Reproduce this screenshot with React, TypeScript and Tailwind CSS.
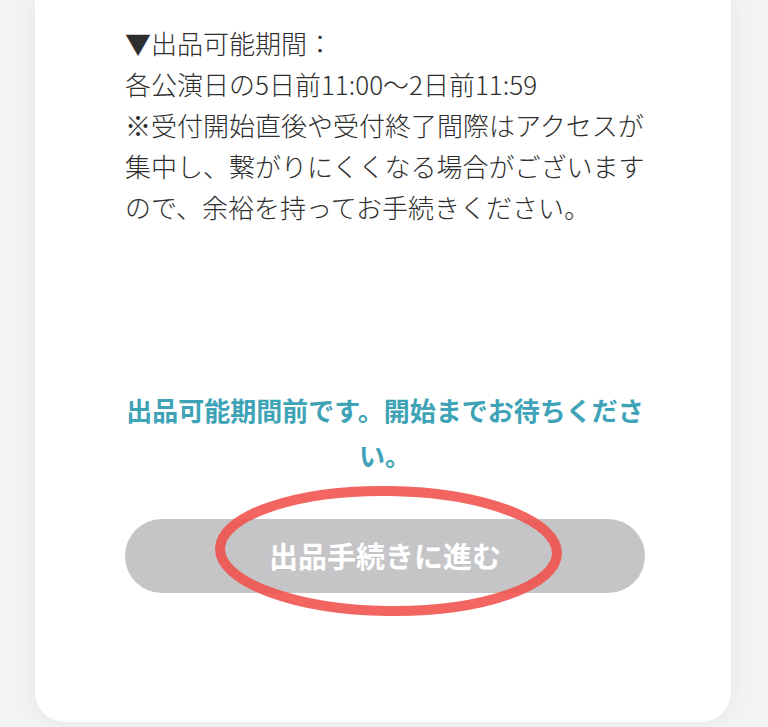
export default function App() {
  const notes = [
    "▼出品可能期間：",
    "各公演日の5日前11:00〜2日前11:59",
    "※受付開始直後や受付終了間際はアクセスが",
    "集中し、繋がりにくくなる場合がございます",
    "ので、余裕を持ってお手続きください。",
  ];

  return (
    <div
      className="min-h-screen bg-[#f3f3f3] pb-[5px]"
      style={{ fontFamily: '"Noto Sans CJK JP", "Noto Sans", sans-serif' }}
    >
      <div className="ml-[35px] w-[696px] h-[722px] bg-white rounded-b-[30px] shadow-[0_0_22px_rgba(0,0,0,0.06)] pl-[90px] pr-[86px] pt-[22px]">
        <div className="text-[26px] leading-[41px] font-light text-[#2e2e2e]">
          {notes.map((line) => (
            <div key={line} className="whitespace-nowrap">
              {line}
            </div>
          ))}
        </div>

        <p className="mt-[160px] -mx-[20px] text-center text-[26px] leading-[45px] font-bold text-[#3ea3b6] whitespace-nowrap">
          出品可能期間前です。開始までお待ちくださ
          <br />
          い。
        </p>

        <div className="relative mt-[42px]">
          <button
            disabled
            className="w-full h-[74px] rounded-full bg-[#c5c5c7] text-white text-[29px] font-bold"
          >
            出品手続きに進む
          </button>
          <svg
            className="absolute left-[85px] top-[-40px] pointer-events-none"
            width="360"
            height="150"
            viewBox="0 0 360 150"
          >
            <ellipse
              cx="178.5"
              cy="72"
              rx="168.5"
              ry="60"
              fill="none"
              stroke="#f0504b"
              strokeOpacity="0.88"
              strokeWidth="10"
              transform="rotate(0.8 178.5 72)"
            />
          </svg>
        </div>
      </div>
    </div>
  );
}
